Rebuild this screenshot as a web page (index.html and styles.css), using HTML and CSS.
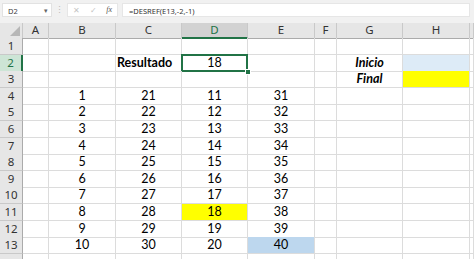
FILE: index.html
```html
<!DOCTYPE html>
<html lang="es">
<head>
  <meta charset="UTF-8">
  <meta name="viewport" content="width=device-width, initial-scale=1.0">
  <title>DESREF</title>
  <link rel="stylesheet" href="styles.css">
</head>
<body>
  <div class="formula-bar">
    <div class="name-box">D2<span class="arrow">▾</span></div>
    <div class="dots">⋮</div>
    <div class="fx-box">
      <span class="fx-btn">✕</span>
      <span class="fx-btn">✓</span>
      <span class="fx-btn fx">fx</span>
    </div>
    <div class="formula">=DESREF(E13,-2,-1)</div>
  </div>

  <div class="sheet">
    <div class="row head">
      <div class="corner"></div>
      <div>A</div><div>B</div><div>C</div><div class="sel">D</div><div>E</div><div>F</div><div>G</div><div>H</div><div></div>
    </div>
    <div class="row"><div class="rh">1</div><div></div><div></div><div></div><div></div><div></div><div></div><div></div><div></div><div></div></div>
    <div class="row"><div class="rh sel">2</div><div></div><div></div><div class="label">Resultado</div><div class="active">18</div><div></div><div></div><div class="tag">Inicio</div><div class="blue-lt"></div><div></div></div>
    <div class="row"><div class="rh">3</div><div></div><div></div><div></div><div></div><div></div><div></div><div class="tag">Final</div><div class="yellow"></div><div></div></div>
    <div class="row"><div class="rh">4</div><div></div><div>1</div><div>21</div><div>11</div><div>31</div><div></div><div></div><div></div><div></div></div>
    <div class="row"><div class="rh">5</div><div></div><div>2</div><div>22</div><div>12</div><div>32</div><div></div><div></div><div></div><div></div></div>
    <div class="row"><div class="rh">6</div><div></div><div>3</div><div>23</div><div>13</div><div>33</div><div></div><div></div><div></div><div></div></div>
    <div class="row"><div class="rh">7</div><div></div><div>4</div><div>24</div><div>14</div><div>34</div><div></div><div></div><div></div><div></div></div>
    <div class="row"><div class="rh">8</div><div></div><div>5</div><div>25</div><div>15</div><div>35</div><div></div><div></div><div></div><div></div></div>
    <div class="row"><div class="rh">9</div><div></div><div>6</div><div>26</div><div>16</div><div>36</div><div></div><div></div><div></div><div></div></div>
    <div class="row"><div class="rh">10</div><div></div><div>7</div><div>27</div><div>17</div><div>37</div><div></div><div></div><div></div><div></div></div>
    <div class="row"><div class="rh">11</div><div></div><div>8</div><div>28</div><div class="yellow">18</div><div>38</div><div></div><div></div><div></div><div></div></div>
    <div class="row"><div class="rh">12</div><div></div><div>9</div><div>29</div><div>19</div><div>39</div><div></div><div></div><div></div><div></div></div>
    <div class="row"><div class="rh">13</div><div></div><div>10</div><div>30</div><div>20</div><div class="blue">40</div><div></div><div></div><div></div><div></div></div>
    <div class="row"><div class="rh"></div><div></div><div></div><div></div><div></div><div></div><div></div><div></div><div></div><div></div></div>
  </div>
</body>
</html>
```

FILE: styles.css
```css
body {
  margin: 0;
  background: #fff;
  font-family: Lato, "Liberation Sans", sans-serif;
  color: #000;
  overflow: hidden;
}

/* formula bar */
.formula-bar {
  display: flex;
  align-items: center;
  height: 23px;
  padding: 0 4px 4px 2px;
  box-sizing: border-box;
  background: #f1f1f1;
  font-family: "Noto Sans", sans-serif;
  font-size: 7.5px;
  color: #444;
}
.name-box {
  position: relative;
  width: 50px;
  height: 14px;
  line-height: 14px;
  padding-left: 5px;
  box-sizing: border-box;
  background: #fff;
  border: 1px solid #e2e2e2;
}
.arrow {
  position: absolute;
  right: 3px;
  top: 0;
  color: #666;
  font-size: 7px;
}
.dots {
  width: 15px;
  text-align: center;
  color: #bbb;
  font-size: 9px;
}
.fx-box {
  display: flex;
  justify-content: space-around;
  align-items: center;
  width: 51px;
  height: 14px;
  background: #fff;
  border: 1px solid #e6e6e6;
  box-sizing: border-box;
  color: #c4c4c4;
  font-size: 8px;
}
.fx-box .fx {
  font-family: "Liberation Serif", serif;
  font-style: italic;
  color: #555;
}
.formula {
  flex: 1;
  margin-left: 4px;
  height: 14px;
  line-height: 14px;
  padding-left: 6px;
  background: #fff;
  border: 1px solid #e6e6e6;
  box-sizing: border-box;
  color: #333;
}

/* grid */
.row {
  display: grid;
  grid-template-columns: 23px 26px 67px 66px 66px 67px 22px 66px 67px 1fr;
  height: 16.6px;
}
.row > div {
  border-right: 1px solid #dcdcdc;
  border-bottom: 1px solid #dcdcdc;
  box-sizing: border-box;
  text-align: center;
  font-size: 12.5px;
  line-height: 16px;
  position: relative;
}

.row.head {
  height: 15px;
}
.row.head > div {
  background: #e6e6e6;
  border-right-color: #c9c9c9;
  border-bottom-color: #ababab;
  font-family: "Noto Sans", sans-serif;
  font-size: 11.5px;
  line-height: 14px;
  color: #333;
}
.row.head > div.sel {
  background: #d2d2d2;
  color: #217346;
  border-bottom: 2px solid #217346;
}
.corner::after {
  content: '';
  position: absolute;
  right: 2px;
  bottom: 2px;
  border-left: 10px solid transparent;
  border-bottom: 10px solid #b7b7b7;
}

.row > .rh {
  background: #e6e6e6;
  border-right-color: #ababab;
  border-bottom-color: #c9c9c9;
  font-family: "Noto Sans", sans-serif;
  font-size: 11.5px;
  color: #333;
}
.row > .rh.sel {
  background: #cde5d6;
  color: #217346;
  border-right: 2px solid #217346;
}

.label {
  font-weight: bold;
}
.row > .label {
  text-align: left;
  padding-left: 1px;
}
.tag {
  font-weight: bold;
  font-style: italic;
}
.yellow {
  background: #ffff00;
}
.blue {
  background: #bdd7ee;
}
.blue-lt {
  background: #ddebf7;
}

.active::after {
  content: '';
  position: absolute;
  left: -1px;
  top: -1px;
  right: -1px;
  bottom: -1px;
  border: 2px solid #217346;
}
.active::before {
  content: '';
  position: absolute;
  right: -4px;
  bottom: -4px;
  width: 4px;
  height: 4px;
  background: #217346;
  border: 1px solid #fff;
  z-index: 1;
}
```
